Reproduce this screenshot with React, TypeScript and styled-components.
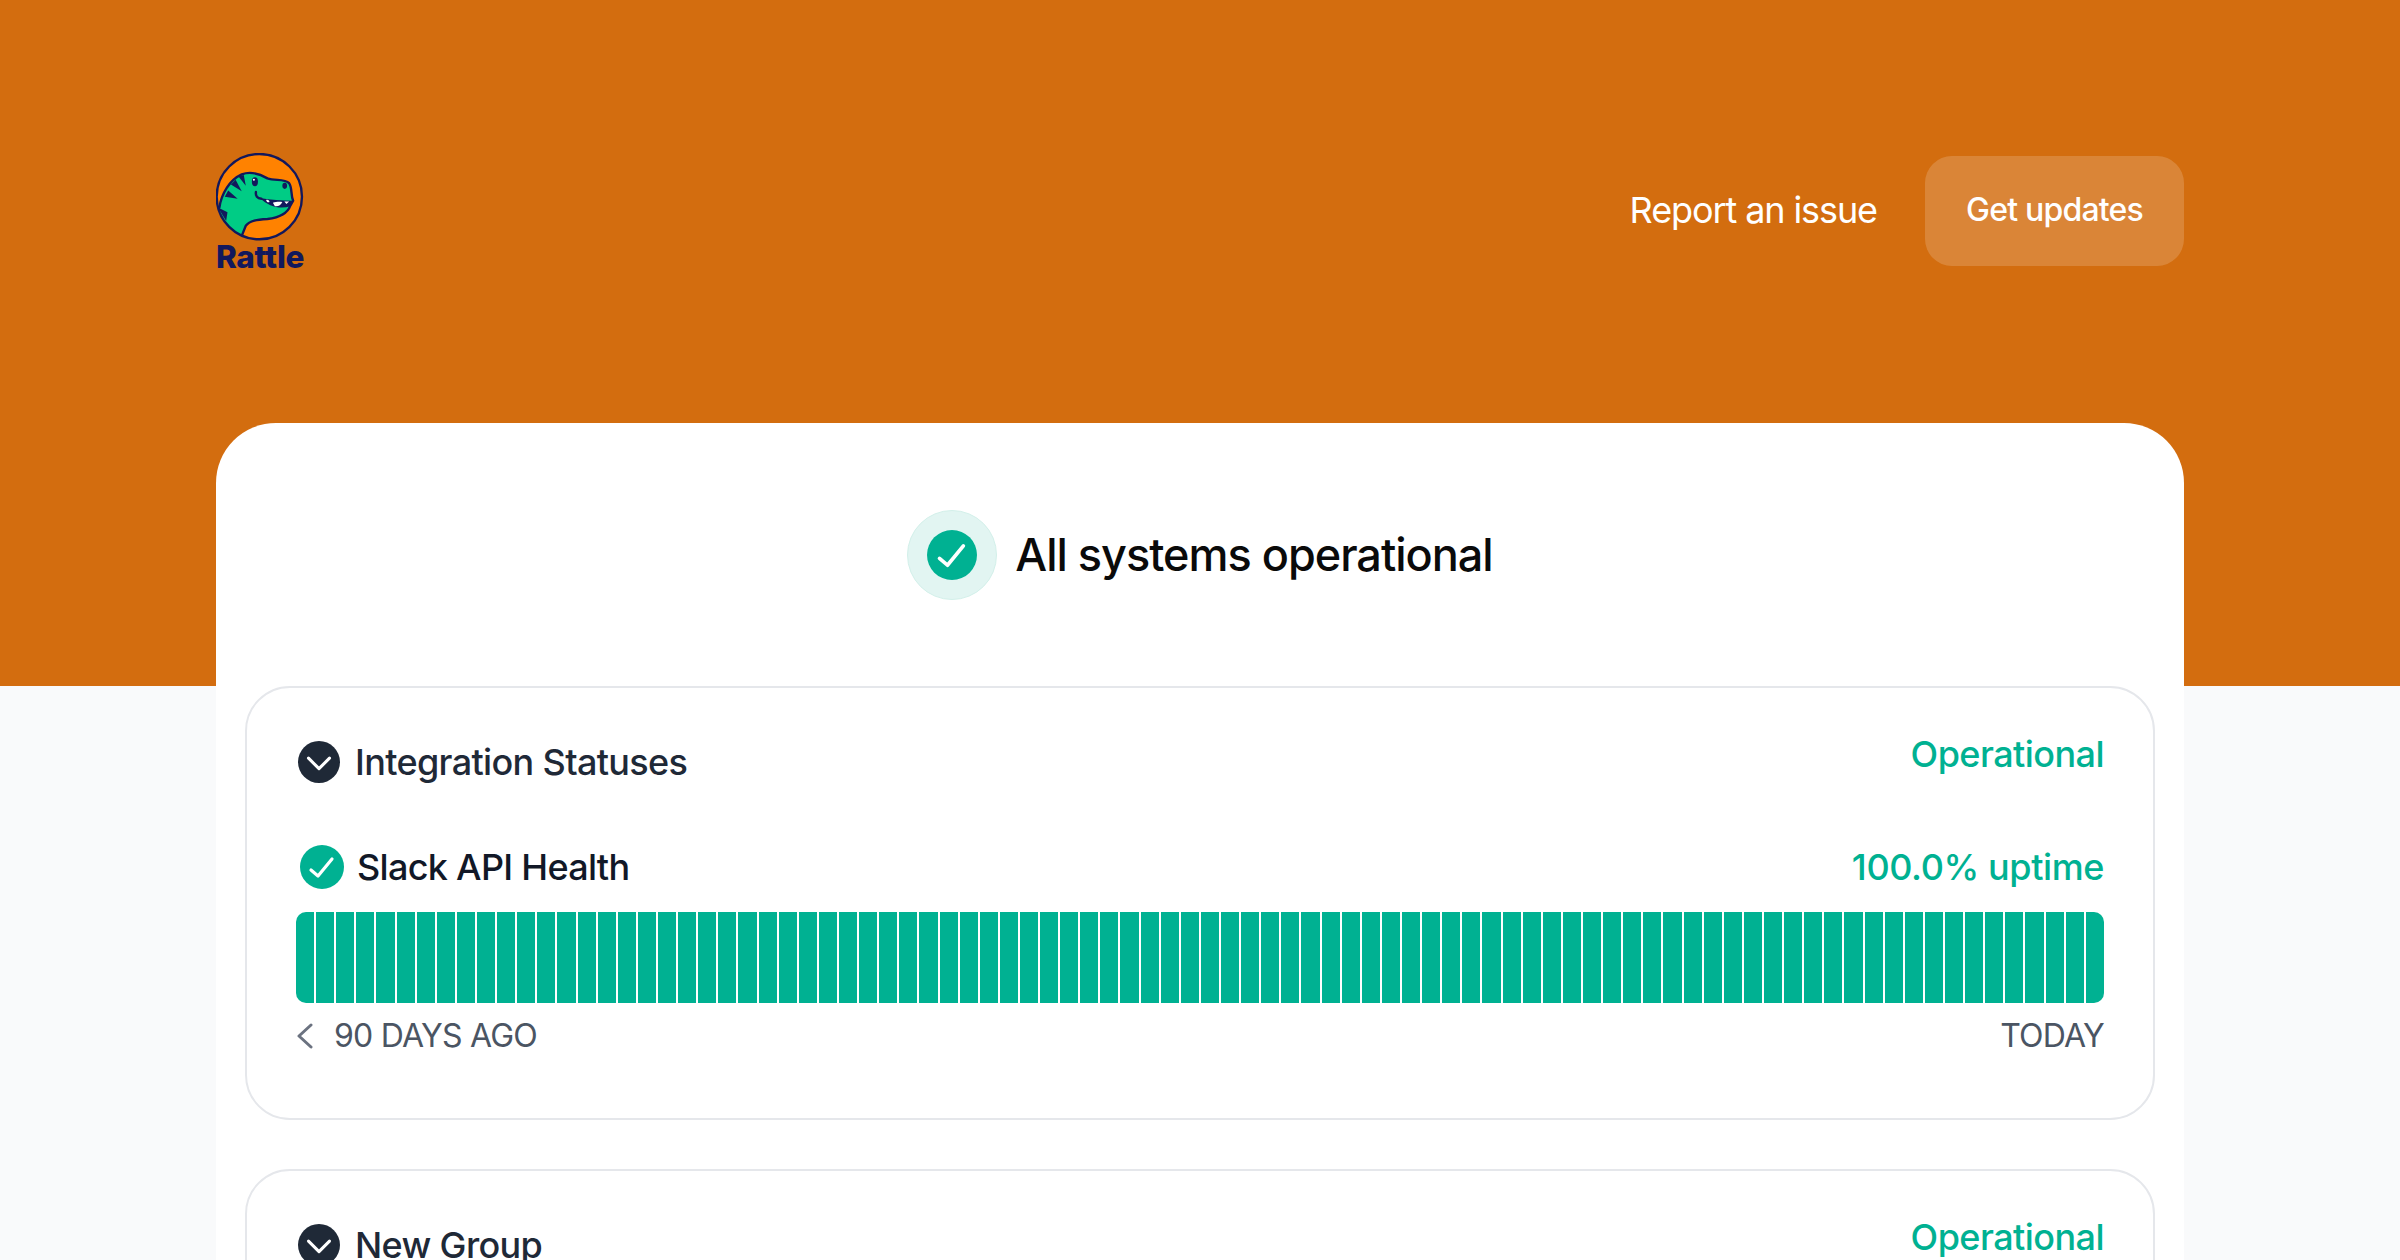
import React from "react";
import styled, { createGlobalStyle } from "styled-components";

const Global = createGlobalStyle`
  html, body { margin: 0; padding: 0; height: 1260px; overflow: hidden; }
  body { font-family: Inter, "Noto Sans", sans-serif; background: #f9fafb; }
`;

const Page = styled.div`
  height: 1260px;
  overflow: hidden;
  background: linear-gradient(#d36d0f 0, #d36d0f 686px, #f9fafb 686px);
  padding: 0 216px;
  box-sizing: border-box;
`;

const Nav = styled.header`
  height: 423px;
  padding-top: 153px;
  box-sizing: border-box;
  display: flex;
  justify-content: space-between;
  align-items: flex-start;
`;

const Brand = styled.div`
  display: flex;
  flex-direction: column;
  align-items: center;
  width: 88px;
`;

const BrandName = styled.span`
  font-family: Inter, sans-serif;
  font-weight: 800;
  font-size: 31.5px;
  line-height: 32px;
  letter-spacing: -0.3px;
  color: #12185c;
`;

const NavActions = styled.nav`
  display: flex;
  align-items: center;
  gap: 48px;
  padding-top: 3px;
`;

const NavLink = styled.a`
  font-size: 36px;
  color: #fff;
  font-weight: 400;
  letter-spacing: -1.1px;
  padding-bottom: 2px;
`;

const UpdatesButton = styled.button`
  width: 259px;
  height: 110px;
  border: 0;
  border-radius: 27px;
  padding: 0 0 3px;
  background: rgba(255, 255, 255, 0.17);
  color: #fff;
  font-family: inherit;
  font-size: 32px;
  font-weight: 500;
  letter-spacing: -0.8px;
`;

const Card = styled.main`
  background: #fff;
  border-radius: 60px 60px 0 0;
  padding: 0 29px;
  height: 900px;
`;

const Hero = styled.div`
  height: 263px;
  display: flex;
  align-items: center;
  justify-content: center;
  gap: 18px;
  box-sizing: border-box;
`;

const HeroRing = styled.div`
  width: 90px;
  height: 90px;
  border-radius: 50%;
  background: #e2f5f2;
  border: 1.5px solid #d3f0ea;
  box-sizing: border-box;
  display: flex;
  align-items: center;
  justify-content: center;
`;

const HeroTitle = styled.h1`
  margin: 0;
  font-size: 45px;
  font-weight: 500;
  color: #0a0a0a;
  letter-spacing: -1px;
`;

const Group = styled.section`
  border: 2.5px solid #e5e7eb;
  border-radius: 45px;
  box-sizing: border-box;
  padding: 41px 49px 0;
  height: 434px;
  margin-bottom: 49px;
`;

const GroupHead = styled.div`
  display: flex;
  justify-content: space-between;
  align-items: flex-start;
`;

const GroupTitle = styled.div`
  display: flex;
  align-items: center;
  gap: 15px;
  font-size: 36px;
  line-height: 66px;
  color: #1f2937;
  font-weight: 450;
  letter-spacing: -0.65px;
`;

const Status = styled.span`
  font-size: 36px;
  font-weight: 500;
  line-height: 50px;
  color: #00b192;
  letter-spacing: -0.55px;
`;

const ServiceRow = styled.div`
  display: flex;
  justify-content: space-between;
  align-items: center;
  margin-top: 42px;
  height: 60px;
`;

const ServiceName = styled.div`
  display: flex;
  align-items: center;
  gap: 13px;
  padding-left: 4px;
  font-size: 36px;
  font-weight: 500;
  color: #111827;
  letter-spacing: -0.7px;
`;

const Uptime = styled.span`
  font-size: 36px;
  font-weight: 500;
  color: #00b192;
  letter-spacing: -0.4px;
`;

const Bars = styled.div`
  margin-top: 15px;
  height: 91px;
  display: flex;
  gap: 2px;
  border-radius: 10px;
  overflow: hidden;
`;

const Bar = styled.div`
  flex: 1;
  background: #00b192;
`;

const Axis = styled.div`
  display: flex;
  justify-content: space-between;
  align-items: center;
  margin-top: 13px;
  font-size: 32px;
  line-height: 40px;
  color: #4b5563;
  letter-spacing: -0.75px;
`;

const AxisStart = styled.span`
  display: flex;
  align-items: center;
  gap: 20px;
`;

const IconSvg = styled.svg`
  display: block;
  flex: none;
`;

const CollapseSvg = styled(IconSvg)`
  margin-left: 2px;
`;

const Check = ({ size }: { size: number }) => (
  <IconSvg width={size} height={size} viewBox="0 0 44 44">
    <circle cx="22" cy="22" r="22" fill="#00b192" />
    <path d="M11 25 L18 31 L32 14" fill="none" stroke="#fff" strokeWidth="3.2" strokeLinecap="round" strokeLinejoin="round" />
  </IconSvg>
);

const Collapse = () => (
  <CollapseSvg width="42" height="42" viewBox="0 0 44 44">
    <circle cx="22" cy="22" r="22" fill="#1f2937" />
    <path d="M11 18 L22 29 L33 18" fill="none" stroke="#fff" strokeWidth="3.2" strokeLinecap="round" strokeLinejoin="round" />
  </CollapseSvg>
);

const Back = () => (
  <IconSvg width="18" height="26" viewBox="0 0 18 26">
    <path d="M15 2 L3 13 L15 24" fill="none" stroke="#6b7280" strokeWidth="3" strokeLinecap="round" strokeLinejoin="round" />
  </IconSvg>
);

const Logo = () => (
  <IconSvg width="88" height="88" viewBox="110 71 260 260">
    <defs>
      <clipPath id="disc"><circle cx="238" cy="200" r="126" /></clipPath>
    </defs>
    <circle cx="238" cy="200" r="126" fill="#ff8200" />
    <g clipPath="url(#disc)">
      <path
        d="M186 340 L100 320 L100 238 L120 232 C126 192 150 150 186 134 C212 124 238 132 262 146 C285 154 312 146 326 160 C336 174 330 195 338 212 L330 226 C322 248 300 262 262 266 C232 268 210 270 198 286 L186 316 Z"
        fill="#00cc85"
        stroke="#12185c"
        strokeWidth="7"
        strokeLinejoin="round"
      />
      <path d="M240 204 C270 210 305 212 338 212 L330 228 C300 238 266 230 240 204 Z" fill="#12185c" />
      <path d="M258 210 C264 208 268 212 268 216 C263 218 260 216 258 210 Z M278 218 C288 214 300 214 306 216 C302 226 292 230 284 228 Z M312 214 L326 214 L318 222 Z" fill="#fff" />
      <path d="M228 186 C226 198 232 206 244 206" fill="none" stroke="#12185c" strokeWidth="7" strokeLinecap="round" />
      <path d="M176 140 L192 136 L198 168 Z M154 164 L168 150 L186 184 Z M136 200 L146 182 L174 206 Z M116 232 L144 246 L140 272 Z" fill="#12185c" />
      <ellipse cx="225" cy="156" rx="9" ry="13" fill="#12185c" />
      <circle cx="222" cy="150" r="3" fill="#fff" />
      <ellipse cx="313" cy="168" rx="7" ry="9" fill="#12185c" />
    </g>
    <circle cx="238" cy="200" r="126" fill="none" stroke="#12185c" strokeWidth="7" />
  </IconSvg>
);

export default function App() {
  return (
    <Page>
      <Global />
      <Nav>
        <Brand>
          <Logo />
          <BrandName>Rattle</BrandName>
        </Brand>
        <NavActions>
          <NavLink>Report an issue</NavLink>
          <UpdatesButton>Get updates</UpdatesButton>
        </NavActions>
      </Nav>
      <Card>
        <Hero>
          <HeroRing>
            <Check size={50} />
          </HeroRing>
          <HeroTitle>All systems operational</HeroTitle>
        </Hero>
        <Group>
          <GroupHead>
            <GroupTitle>
              <Collapse />
              Integration Statuses
            </GroupTitle>
            <Status>Operational</Status>
          </GroupHead>
          <ServiceRow>
            <ServiceName>
              <Check size={44} />
              Slack API Health
            </ServiceName>
            <Uptime>100.0% uptime</Uptime>
          </ServiceRow>
          <Bars>
            {Array.from({ length: 90 }, (_, i) => (
              <Bar key={i} />
            ))}
          </Bars>
          <Axis>
            <AxisStart>
              <Back />
              90 DAYS AGO
            </AxisStart>
            <span>TODAY</span>
          </Axis>
        </Group>
        <Group>
          <GroupHead>
            <GroupTitle>
              <Collapse />
              New Group
            </GroupTitle>
            <Status>Operational</Status>
          </GroupHead>
        </Group>
      </Card>
    </Page>
  );
}
